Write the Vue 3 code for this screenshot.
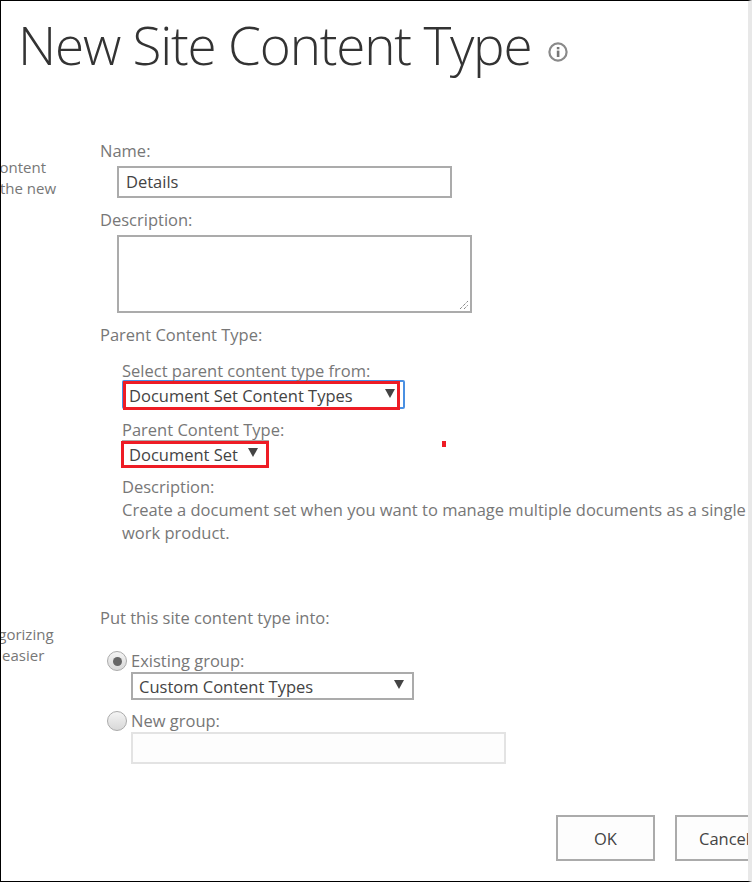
<script setup>
const descLine1 = 'Create a document set when you want to manage multiple documents as a single'
</script>

<template>
  <div class="page">
    <h1 class="title">
      <span>New Site Content Type</span>
      <svg class="info" width="22" height="22" viewBox="0 0 22 22">
        <circle cx="11" cy="11" r="8.6" fill="#fff" stroke="#8a8a8a" stroke-width="2.2" />
        <rect x="9.8" y="9.6" width="2.6" height="6.4" fill="#777" />
        <rect x="9.8" y="6" width="2.6" height="2.3" fill="#777" />
      </svg>
    </h1>

    <div class="body">
      <div class="side">
        <div class="side-top">
          <div class="cut-a">Content</div>
          <div class="cut-b">of the new</div>
        </div>
        <div class="side-bottom">
          <div class="cut-c">categorizing</div>
          <div class="cut-d">it easier</div>
        </div>
      </div>

      <div class="form">
        <label class="lbl">Name:</label>
        <div class="name-input">Details</div>

        <label class="lbl desc-lbl">Description:</label>
        <div class="textarea">
          <svg class="grip" width="10" height="10" viewBox="0 0 10 10">
            <path d="M1 9 L9 1 M5 9 L9 5" stroke="#555" stroke-width="1" stroke-dasharray="1 1" fill="none" />
          </svg>
        </div>

        <label class="lbl parent-lbl">Parent Content Type:</label>
        <div class="parent">
          <div class="sub-lbl">Select parent content type from:</div>
          <div class="focus-select">
            <div class="red-box wide">
              <span>Document Set Content Types</span>
              <i class="arrow"></i>
            </div>
          </div>
          <div class="sub-lbl second">Parent Content Type:</div>
          <div class="red-box narrow">
            <span>Document Set</span>
            <i class="arrow"></i>
          </div>
          <div class="sub-lbl third">Description:</div>
          <div class="sub-lbl desc-text">{{ descLine1 }}</div>
          <div class="sub-lbl desc-text">work product.</div>
          <i class="red-dot"></i>
        </div>

        <label class="lbl put-lbl">Put this site content type into:</label>
        <div class="group">
          <div class="radio-row">
            <span class="radio on"><i></i></span>
            <span class="sub-lbl">Existing group:</span>
          </div>
          <div class="group-select">
            <span>Custom Content Types</span>
            <i class="arrow"></i>
          </div>
          <div class="radio-row second-radio">
            <span class="radio"></span>
            <span class="sub-lbl">New group:</span>
          </div>
          <div class="group-input"></div>
        </div>

        <div class="buttons">
          <button class="btn">OK</button>
          <button class="btn cancel">Cancel</button>
        </div>
      </div>
    </div>
  </div>
</template>

<style>
html, body {
  margin: 0;
  background: #fff;
}
</style>

<style scoped>
.page {
  box-sizing: border-box;
  width: 752px;
  height: 882px;
  border-top: 1px solid #000;
  border-left: 1px solid #000;
  border-bottom: 1px solid #000;
  border-right: 4px solid #e8e8e8;
  overflow: hidden;
  font-family: "Open Sans", "Noto Sans", sans-serif;
  color: #777;
  font-size: 16.5px;
  background: #fff;
}

.title {
  display: flex;
  align-items: center;
  margin: 9px 0 0 17px;
  height: 70px;
  font-family: "Open Sans", sans-serif;
  font-weight: 300;
  font-size: 53px;
  line-height: 70px;
  letter-spacing: -1.2px;
  color: #333;
  white-space: nowrap;
}

.info {
  margin: 14px 0 0 16px;
}

.body {
  display: flex;
  margin-top: 60px;
}

.side {
  width: 99px;
  flex: none;
  overflow: hidden;
  font-size: 15px;
  line-height: 21px;
  color: #777;
}

.side > div > div {
  white-space: nowrap;
}

.cut-a {
  margin-left: -11px;
}

.cut-b {
  margin-left: -19px;
}

.cut-c {
  margin-left: -32px;
}

.cut-d {
  margin-left: -12px;
}

.side-top {
  margin-top: 17px;
}

.side-bottom {
  margin-top: 425px;
}

.lbl {
  display: block;
  line-height: 22px;
  font-size: 16.5px;
  color: #777;
}

.name-input {
  box-sizing: border-box;
  margin: 4px 0 0 17px;
  width: 335px;
  height: 32px;
  border: 2px solid #ababab;
  padding-left: 7px;
  line-height: 28px;
  font-size: 16.5px;
  color: #444;
}

.desc-lbl {
  margin-top: 11px;
}

.textarea {
  box-sizing: border-box;
  position: relative;
  margin: 4px 0 0 17px;
  width: 355px;
  height: 78px;
  border: 2px solid #ababab;
}

.grip {
  position: absolute;
  right: 1px;
  bottom: 1px;
}

.parent-lbl {
  margin-top: 11px;
}

.parent {
  position: relative;
  margin: 14px 0 0 22px;
  width: 640px;
}

.sub-lbl {
  font-size: 16.5px;
  line-height: 22px;
  color: #777;
  white-space: nowrap;
}

.focus-select {
  box-sizing: border-box;
  width: 283px;
  height: 29px;
  margin-top: -2px;
  border: 2px solid #4a90e2;
  border-radius: 2px;
}

.red-box {
  box-sizing: border-box;
  display: flex;
  align-items: center;
  justify-content: space-between;
  border: 3px solid #ee1c25;
  font-size: 16.5px;
  color: #444;
}

.wide {
  width: 277px;
  height: 29px;
  margin: -1px 0 0 -1px;
  padding: 0 2px 0 3px;
}

.narrow {
  width: 148px;
  height: 27px;
  margin-left: -1px;
  padding: 0 8px 0 5px;
}

.second {
  margin-top: 10px;
  border-bottom: 1px solid #ababab;
  width: 147px;
  height: 21px;
}

.arrow {
  display: block;
  width: 0;
  height: 0;
  border-left: 5px solid transparent;
  border-right: 5px solid transparent;
  border-top: 9px solid #444;
  margin-bottom: 4px;
}

.third {
  margin-top: 8px;
}

.desc-text {
  margin-top: 1px;
}

.red-dot {
  position: absolute;
  left: 320px;
  top: 81px;
  width: 4px;
  height: 6px;
  background: #ee1c25;
}

.put-lbl {
  margin-top: 63px;
}

.group {
  margin: 21px 0 0 7px;
}

.radio-row {
  display: flex;
  align-items: center;
  gap: 4px;
  height: 22px;
}

.radio {
  box-sizing: border-box;
  display: flex;
  align-items: center;
  justify-content: center;
  width: 20px;
  height: 20px;
  border-radius: 50%;
  border: 1px solid #ababab;
  background: linear-gradient(#f4f4f4, #d8d8d8);
}

.radio i {
  width: 9px;
  height: 9px;
  border-radius: 50%;
  background: #666;
}

.group-select {
  box-sizing: border-box;
  display: flex;
  align-items: center;
  justify-content: space-between;
  margin: 0 0 0 24px;
  width: 283px;
  height: 28px;
  border: 2px solid #ababab;
  padding: 0 8px 0 6px;
  font-size: 16.5px;
  color: #444;
}

.second-radio {
  margin-top: 10px;
}

.group-input {
  box-sizing: border-box;
  margin: 0 0 0 24px;
  width: 375px;
  height: 32px;
  border: 2px solid #e3e3e3;
  background: #fdfdfd;
}

.buttons {
  display: flex;
  gap: 20px;
  margin: 51px 0 0 456px;
}

.btn {
  box-sizing: border-box;
  flex: none;
  width: 99px;
  height: 46px;
  border: 2px solid #ababab;
  background: #fdfdfd;
  font-family: "Open Sans", sans-serif;
  font-size: 16.5px;
  color: #444;
  padding: 0;
}
</style>
